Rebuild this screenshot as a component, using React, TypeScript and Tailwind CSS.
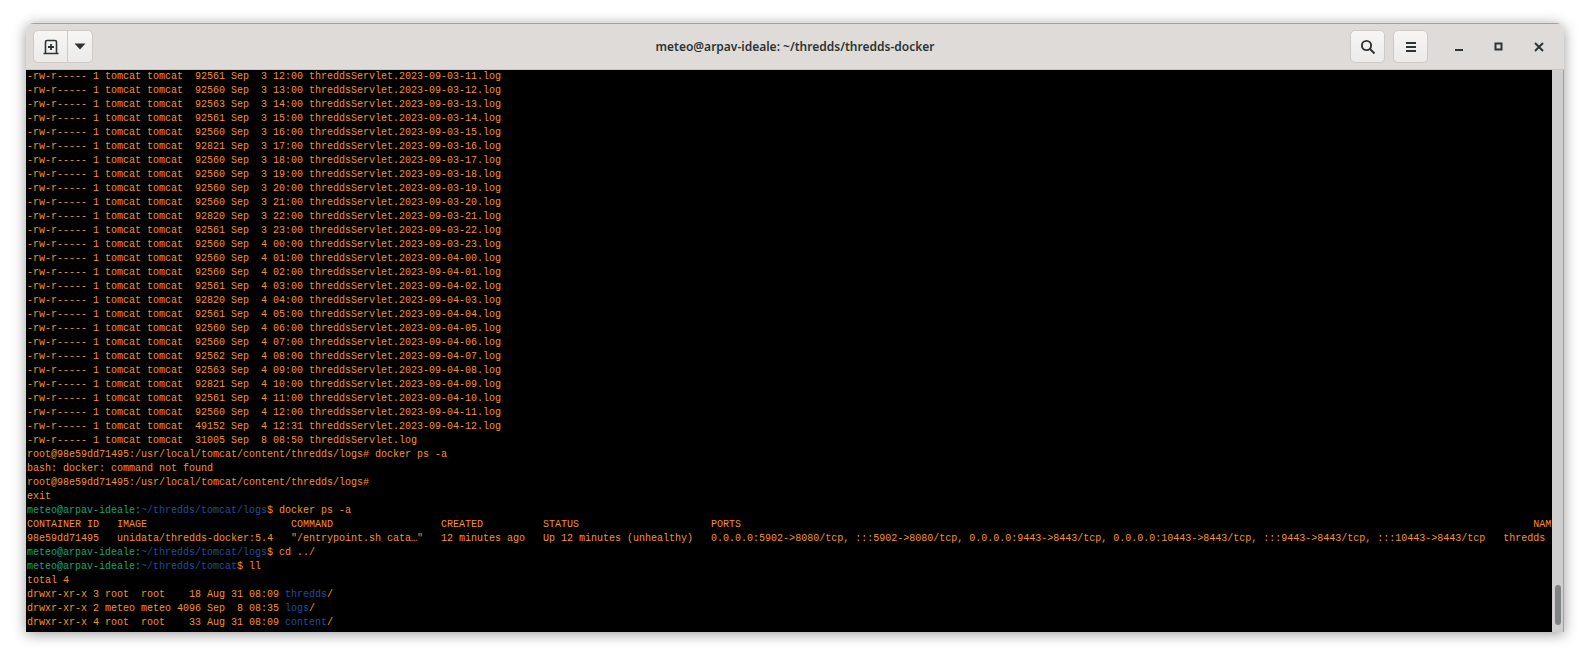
import React from "react";

type Seg = { text: string; color?: "green" | "blue" };

const logLines: [string, string, string, string][] = [
  ["92561", " 3", "12:00", "2023-09-03-11"],
  ["92560", " 3", "13:00", "2023-09-03-12"],
  ["92563", " 3", "14:00", "2023-09-03-13"],
  ["92561", " 3", "15:00", "2023-09-03-14"],
  ["92560", " 3", "16:00", "2023-09-03-15"],
  ["92821", " 3", "17:00", "2023-09-03-16"],
  ["92560", " 3", "18:00", "2023-09-03-17"],
  ["92560", " 3", "19:00", "2023-09-03-18"],
  ["92560", " 3", "20:00", "2023-09-03-19"],
  ["92560", " 3", "21:00", "2023-09-03-20"],
  ["92820", " 3", "22:00", "2023-09-03-21"],
  ["92561", " 3", "23:00", "2023-09-03-22"],
  ["92560", " 4", "00:00", "2023-09-03-23"],
  ["92560", " 4", "01:00", "2023-09-04-00"],
  ["92560", " 4", "02:00", "2023-09-04-01"],
  ["92561", " 4", "03:00", "2023-09-04-02"],
  ["92820", " 4", "04:00", "2023-09-04-03"],
  ["92561", " 4", "05:00", "2023-09-04-04"],
  ["92560", " 4", "06:00", "2023-09-04-05"],
  ["92560", " 4", "07:00", "2023-09-04-06"],
  ["92562", " 4", "08:00", "2023-09-04-07"],
  ["92563", " 4", "09:00", "2023-09-04-08"],
  ["92821", " 4", "10:00", "2023-09-04-09"],
  ["92561", " 4", "11:00", "2023-09-04-10"],
  ["92560", " 4", "12:00", "2023-09-04-11"],
  ["49152", " 4", "12:31", "2023-09-04-12"],
];

const prompt = (path: string, cmd: string): Seg[] => [
  { text: "meteo@arpav-ideale:", color: "green" },
  { text: path, color: "blue" },
  { text: "$ " + cmd },
];

const lines: Seg[][] = [
  ...logLines.map(([size, day, time, stamp]) => [
    { text: `-rw-r----- 1 tomcat tomcat  ${size} Sep ${day} ${time} threddsServlet.${stamp}.log` },
  ]),
  [{ text: "-rw-r----- 1 tomcat tomcat  31005 Sep  8 08:50 threddsServlet.log" }],
  [{ text: "root@98e59dd71495:/usr/local/tomcat/content/thredds/logs# docker ps -a" }],
  [{ text: "bash: docker: command not found" }],
  [{ text: "root@98e59dd71495:/usr/local/tomcat/content/thredds/logs#" }],
  [{ text: "exit" }],
  prompt("~/thredds/tomcat/logs", "docker ps -a"),
  [{ text: "CONTAINER ID   IMAGE                        COMMAND                  CREATED          STATUS                      PORTS                                                                                                                                    NAMES" }],
  [{ text: '98e59dd71495   unidata/thredds-docker:5.4   "/entrypoint.sh cata…"   12 minutes ago   Up 12 minutes (unhealthy)   0.0.0.0:5902->8080/tcp, :::5902->8080/tcp, 0.0.0.0:9443->8443/tcp, 0.0.0.0:10443->8443/tcp, :::9443->8443/tcp, :::10443->8443/tcp   thredds' }],
  prompt("~/thredds/tomcat/logs", "cd ../"),
  prompt("~/thredds/tomcat", "ll"),
  [{ text: "total 4" }],
  [{ text: "drwxr-xr-x 3 root  root    18 Aug 31 08:09 " }, { text: "thredds", color: "blue" }, { text: "/" }],
  [{ text: "drwxr-xr-x 2 meteo meteo 4096 Sep  8 08:35 " }, { text: "logs", color: "blue" }, { text: "/" }],
  [{ text: "drwxr-xr-x 4 root  root    33 Aug 31 08:09 " }, { text: "content", color: "blue" }, { text: "/" }],
];

const HeaderButton: React.FC<{ children: React.ReactNode }> = ({ children }) => (
  <button className="flex h-[33px] w-[35px] items-center justify-center rounded-[5px] border border-[#cfcac5] bg-gradient-to-b from-[#f7f6f5] to-[#edebe9]">
    {children}
  </button>
);

const App: React.FC = () => {
  return (
    <div className="h-[661px] w-[1590px] overflow-hidden bg-white px-[26px] pt-[23px]">
      <div className="flex h-[609px] w-[1538px] flex-col overflow-hidden rounded-t-[8px] shadow-[0_2px_14px_rgba(0,0,0,0.4)]">
        <header className="relative flex h-[47px] shrink-0 items-center justify-between border-t border-t-[#a3a19e] bg-[#dedbd8] pr-[5px] pl-[7px] [border-bottom:1px_solid_#c9c5c1]">
          <div className="flex h-[33px] w-[60px] rounded-[5px] border border-[#cfcac5] bg-gradient-to-b from-[#f7f6f5] to-[#edebe9]">
            <div className="flex w-[34px] items-center justify-center border-r border-r-[#cfcac5]">
              <svg width="16" height="16" viewBox="0 0 16 16" fill="none" stroke="#2e3436">
                <path d="M0.5 14.5h15" strokeWidth="1.4" />
                <path d="M2.5 14V3a1.5 1.5 0 0 1 1.5-1.5h8A1.5 1.5 0 0 1 13.5 3v11" strokeWidth="1.6" />
                <path d="M8 5v6M5 8h6" strokeWidth="1.8" />
              </svg>
            </div>
            <div className="flex flex-1 items-center justify-center">
              <svg width="12" height="7" viewBox="0 0 12 7">
                <path d="M0.5 0.5h11L6 6.5z" fill="#2e3436" />
              </svg>
            </div>
          </div>

          <div className="absolute inset-x-0 top-0 flex h-[46px] items-center justify-center pointer-events-none">
            <span className="font-['Noto_Sans',sans-serif] text-[12px] font-semibold text-[#2e3436]">
              meteo@arpav-ideale: ~/thredds/thredds-docker
            </span>
          </div>

          <div className="flex items-center">
            <div className="flex gap-[8px]">
              <HeaderButton>
                <svg width="16" height="16" viewBox="0 0 16 16" fill="none" stroke="#2e3436">
                  <circle cx="6.5" cy="6.5" r="4.6" strokeWidth="1.9" />
                  <path d="M10 10l4.5 4.5" strokeWidth="2" />
                </svg>
              </HeaderButton>
              <HeaderButton>
                <svg width="12" height="12" viewBox="0 0 12 12" fill="#2e3436">
                  <rect x="1" y="1" width="10" height="2" />
                  <rect x="1" y="5" width="10" height="2" />
                  <rect x="1" y="9" width="10" height="2" />
                </svg>
              </HeaderButton>
            </div>
            <div className="ml-[11px] flex">
              <div className="flex h-[33px] w-[40px] items-center justify-center">
                <svg width="10" height="10" viewBox="0 0 10 10" fill="#2e3436">
                  <rect x="1" y="7" width="8" height="2" />
                </svg>
              </div>
              <div className="flex h-[33px] w-[40px] items-center justify-center">
                <svg width="10" height="10" viewBox="0 0 10 10" fill="none" stroke="#2e3436" strokeWidth="2">
                  <rect x="1.5" y="1.5" width="6" height="6" />
                </svg>
              </div>
              <div className="flex h-[33px] w-[40px] items-center justify-center">
                <svg width="10" height="10" viewBox="0 0 10 10" fill="none" stroke="#2e3436" strokeWidth="2">
                  <path d="M1 1l8 8M9 1l-8 8" />
                </svg>
              </div>
            </div>
          </div>
        </header>

        <div className="flex min-h-0 flex-1">
          <pre className="min-w-0 flex-1 overflow-hidden bg-black pl-px font-['Liberation_Mono',monospace] text-[10px] leading-[14px] text-[#f5951d]">
            {lines.map((segs, i) => (
              <div key={i} className="h-[14px] whitespace-pre">
                {segs.map((seg, j) => (
                  <span
                    key={j}
                    className={
                      seg.color === "green"
                        ? "text-[#0fa67c]"
                        : seg.color === "blue"
                          ? "text-[#1a4fa3]"
                          : undefined
                    }
                  >
                    {seg.text}
                  </span>
                ))}
              </div>
            ))}
          </pre>
          <div className="flex w-[12px] shrink-0 flex-col justify-end border-r border-r-[#a0a0a0] bg-[#cfcfcf] pb-[7px] pl-[3px]">
            <div className="h-[40px] w-[6px] rounded-[3px] bg-[#7f8384]" />
          </div>
        </div>
      </div>
    </div>
  );
};

export default App;
